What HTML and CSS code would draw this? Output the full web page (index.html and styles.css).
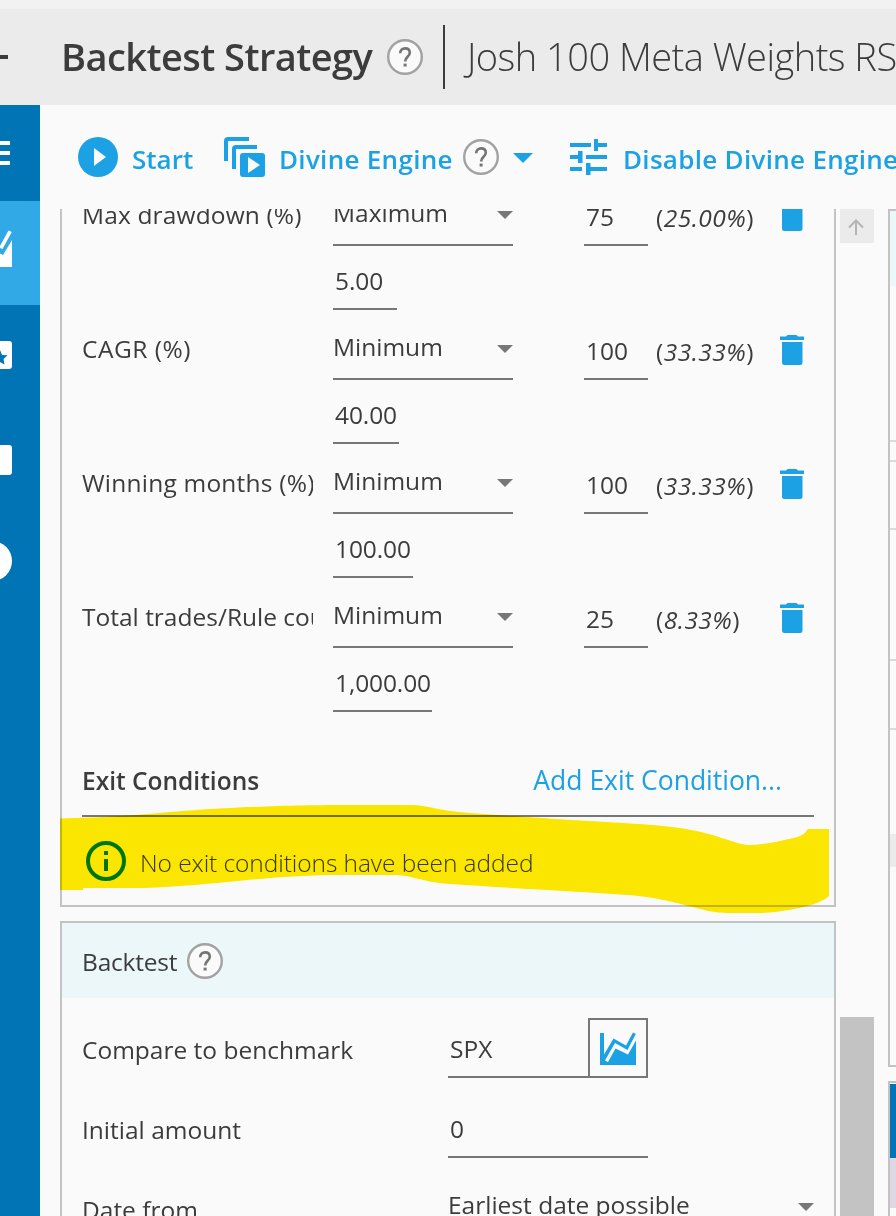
FILE: index.html
```html
<!DOCTYPE html>
<html lang="en">
<head>
<meta charset="utf-8">
<title>Backtest Strategy</title>
<link rel="stylesheet" href="styles.css">
</head>
<body>
<svg width="0" height="0" class="defs" aria-hidden="true">
  <symbol id="help" viewBox="0 0 36 36">
    <circle cx="18" cy="18" r="16.8" fill="#fafafa" stroke="#a2a2a2" stroke-width="2.4"/>
    <path d="M13.2 14.2c0-3 2-4.8 4.9-4.8s4.7 1.8 4.7 4.3c0 4-4.7 4.2-4.7 8.7" fill="none" stroke="#747474" stroke-width="2.6"/>
    <rect x="16.6" y="24.6" width="3" height="2.9" fill="#747474"/>
  </symbol>
  <symbol id="trash" viewBox="0 0 24 30">
    <path d="M0 1.500h6l1.500-1.500h9l1.500 1.500H24V5H0zM2 7h20.500v20.500a2.500 2.500 0 0 1-2.500 2.500H4.500a2.500 2.500 0 0 1-2.500-2.500z" fill="#1ca2e4"/>
  </symbol>
  <symbol id="chart" viewBox="0 0 36 33">
    <path d="M0 1h4v21.500L13.500 6.500 26 13.500 33 0.500l2.800 1.500L27.500 18 15 11 5 28.500l3 1.500 7.500-13.500L28 22.500l8-14V33H0z" fill="currentColor"/>
  </symbol>
</svg>

<div class="strip"></div>
<header class="header">
  <span class="dash"></span>
  <h1 class="title">Backtest Strategy</h1>
  <svg class="help"><use href="#help"/></svg>
  <span class="divider"></span>
  <span class="name">Josh 100 Meta Weights RSI</span>
</header>

<div class="body">
  <nav class="side">
    <div class="item menu"><svg width="40" height="96" viewBox="0 0 40 96"><path d="M0 36h10v4H0zM0 46h10v4H0zM0 56h10v4H0z" fill="#fff"/></svg></div>
    <div class="item active"><svg width="40" height="104" viewBox="0 0 40 104"><path d="M0 45L8.500 29.500l3.300 1.500L2.500 48 0 47zM0 52.500l3 1.500 9-15V66H0z" fill="#fff"/></svg></div>
    <div class="item"><svg width="40" height="300" viewBox="0 0 40 300"><path d="M0 36h9a3 3 0 0 1 3 3v22a3 3 0 0 1-3 3H0zM0 140h9a3 3 0 0 1 3 3v24a3 3 0 0 1-3 3H0z" fill="#fff"/><path d="M0 45l2 5 5.500.3-4 3.700 1 5.500L0 57z" fill="#0074b4"/><circle cx="-8" cy="256" r="20" fill="#fff"/></svg></div>
  </nav>

  <main class="main">
    <div class="toolbar">
      <svg class="play" viewBox="0 0 40 40"><circle cx="20" cy="20" r="20" fill="#1ca2e4"/><path d="M16 11l12 9-12 9z" fill="#fafafa"/></svg>
      <span class="tool start">Start</span>
      <svg class="stack" viewBox="0 0 41 40"><path d="M2 24V4a2 2 0 0 1 2-2h21M10 32V12a2 2 0 0 1 2-2h21" fill="none" stroke="#1ca2e4" stroke-width="4"/><rect x="16" y="16" width="25" height="24" rx="3" fill="#1ca2e4"/><path d="M24 20l12 8-12 8z" fill="#fafafa"/></svg>
      <span class="tool divine">Divine Engine</span>
      <svg class="help"><use href="#help"/></svg>
      <svg class="caret-blue" viewBox="0 0 20 10"><path d="M0 0h20L10 10z" fill="#1ca2e4"/></svg>
      <svg class="tune" viewBox="0 0 37 36"><path d="M0 4h21v4H0zM24 0h4v4h9v4h-9v4h-4zM0 16h8v-4h4.500v12H8v-4H0zM16 16h21v4H16zM0 28h12v4H0zM16 24h4.500v4H37v4H20.500v4H16z" fill="#1ca2e4"/></svg>
      <span class="tool disable">Disable Divine Engine</span>
    </div>

    <div class="columns">
      <div class="left">
        <section class="panel criteria">
          <div class="row">
            <span class="label l1">Max drawdown (%)</span>
            <div class="field"><div class="select"><span class="s0">Maximum</span><i class="caret"></i></div><div class="value w64">5.00</div></div>
            <div class="weight">75</div><span class="pct">(<em>25.00%</em>)</span><svg class="trash"><use href="#trash"/></svg>
          </div>
          <div class="row">
            <span class="label l2">CAGR (%)</span>
            <div class="field"><div class="select"><span>Minimum</span><i class="caret"></i></div><div class="value w66">40.00</div></div>
            <div class="weight">100</div><span class="pct">(<em>33.33%</em>)</span><svg class="trash"><use href="#trash"/></svg>
          </div>
          <div class="row">
            <span class="label l3">Winning months (%)</span>
            <div class="field"><div class="select"><span>Minimum</span><i class="caret"></i></div><div class="value w80">100.00</div></div>
            <div class="weight">100</div><span class="pct">(<em>33.33%</em>)</span><svg class="trash"><use href="#trash"/></svg>
          </div>
          <div class="row">
            <span class="label l4">Total trades/Rule count</span>
            <div class="field"><div class="select"><span>Minimum</span><i class="caret"></i></div><div class="value w99">1,000.00</div></div>
            <div class="weight">25</div><span class="pct">(<em>8.33%</em>)</span><svg class="trash"><use href="#trash"/></svg>
          </div>
          <div class="exit-head"><h2 class="exit-title">Exit Conditions</h2><a class="add">Add Exit Condition...</a></div>
          <div class="notice">
            <svg class="info" viewBox="0 0 40 40"><circle cx="20" cy="20" r="18" fill="none" stroke="#008000" stroke-width="4"/><path d="M18 10h4v4h-4zM18 18h4v12h-4z" fill="#008000"/></svg>
            <span class="notice-text">No exit conditions have been added</span>
          </div>
          <svg class="marker" viewBox="0 0 780 120"><path d="M0 18.500L30 17.500C80 16 110 11 160 8.500S240 5 300 5h50c18 0 28 6 60 8 40 3 70 5 110 7.500s65 3 100 7.500c40 6 55 17 70 17s45-7 50-9c4-2 5-3 8-7h21v67c-7 7-22 10-30 12-20 4-30 5-40 5h-30c-30 0-45-13-100-18-55-4-140-8-185-11.500-25-3-34-8-47-8.500H270c-80 2-110 10-187 13H23v2H0z" fill="#ffeb00"/></svg>
        </section>

        <section class="panel backtest">
          <div class="panel-head"><h2 class="panel-title">Backtest</h2><svg class="help"><use href="#help"/></svg></div>
          <div class="form">
            <div class="form-row"><span class="label f1">Compare to benchmark</span><div class="input bench"><span class="spx">SPX</span><div class="chart-btn"><svg class="chart"><use href="#chart"/></svg></div></div></div>
            <div class="form-row"><span class="label f2">Initial amount</span><div class="input">0</div></div>
            <div class="form-row date"><span class="label f3">Date from</span><div class="date-select"><span>Earliest date possible</span><i class="caret"></i></div></div>
          </div>
        </section>
      </div>

      <div class="scroll"><div class="up"><svg width="18" height="18" viewBox="0 0 18 18"><path d="M9 17V3M2 9.500l7-7 7 7" fill="none" stroke="#b4b4b4" stroke-width="2"/></svg></div><div class="thumb"></div></div>

      <div class="right">
        <div class="side-panel">
          <div class="sp-head"></div>
          <div class="cell c1"></div><div class="cell c2"></div><div class="cell c3"></div><div class="cell c4"></div><div class="cell c5"></div><div class="cell c6"></div><div class="sp-bar"></div>
        </div>
        <div class="side-panel second"><div class="sp-blue"></div><div class="sp-lilac"></div></div>
      </div>
    </div>
  </main>
</div>
</body>
</html>
```

FILE: styles.css
```css
* { box-sizing: border-box; }
body { margin: 0; width: 896px; height: 1216px; overflow: hidden; display: flex; flex-direction: column; background: #fafafa; color: #3c3c3c; font: 24.5px/34px "Open Sans", "Noto Sans", sans-serif; }
h1, h2 { margin: 0; font-size: inherit; }
svg { display: block; flex: none; }
span, h1, h2, a { white-space: nowrap; }
.defs { position: absolute; }
.strip { flex: none; height: 9px; background: #f2f2f2; }
.header { flex: none; height: 96px; background: #ebebeb; display: flex; align-items: center; overflow: hidden; }
.dash { width: 8px; height: 4px; background: #3c3c3c; flex: none; }
.title { width: 313px; margin-left: 53px; margin-right: 13px; font-size: 38px; line-height: 50px; font-weight: 600; letter-spacing: -0.55px; flex: none; margin-top: -2px; }
.help { width: 36px; height: 36px; }
.divider { flex: none; width: 2px; height: 64px; background: #3c3c3c; margin-left: 20px; margin-right: 22px; }
.name { font-size: 38px; line-height: 50px; font-weight: 300; letter-spacing: -0.52px; margin-top: -2px; }

.body { flex: 1; display: flex; min-height: 0; }
.side { width: 40px; flex: none; background: #0074b4; overflow: hidden; }
.item.active { background: #31a9e6; }
.main { flex: 1; min-width: 0; display: flex; flex-direction: column; }
.toolbar { height: 104px; flex: none; display: flex; align-items: center; padding-left: 38px; overflow: hidden; color: #1ca2e4; font-size: 26px; font-weight: 600; }
.play { width: 40px; height: 40px; margin-right: 14px; }
.tool { flex: none; padding-top: 4px; }
.start { width: 61px; margin-right: 31px; }
.stack { width: 41px; height: 40px; margin-right: 14px; }
.divine { width: 173px; margin-right: 11px; letter-spacing: 0.3px; }
.disable { letter-spacing: 0.3px; }
.caret-blue { width: 20px; height: 10px; margin: 2px 37px 0 14px; }
.tune { width: 37px; height: 36px; margin-right: 16px; }

.columns { flex: 1; min-height: 0; display: flex; overflow: hidden; padding-left: 20px; }
.left { width: 776px; flex: none; display: flex; flex-direction: column; gap: 14px; }
.panel { border: 2px solid #c3c3c3; flex: none; }
.criteria { position: relative; height: 709px; margin-top: -11px; border-top: 0; padding-left: 20px; padding-right: 20px; padding-top: 2px; }
.row { display: flex; height: 134px; }
.label { width: 231px; flex: none; overflow: hidden; height: 34px; margin-top: -2px; }
.row .label { margin-right: 20px; }
.l1 { letter-spacing: 0.15px; }
.l2 { letter-spacing: 0.5px; }
.l3 { letter-spacing: 0.22px; }
.field { width: 180px; flex: none; margin-right: 71px; }
.select { height: 46px; border-bottom: 2px solid #777; display: flex; justify-content: space-between; line-height: 34px; }
.select span { margin-top: -4px; }
.caret { width: 16px; height: 8px; background: #777; clip-path: polygon(0 0, 100% 0, 50% 100%); margin-top: 11px; flex: none; }
.value { height: 64px; border-bottom: 2px solid #777; padding: 18px 0 0 2px; letter-spacing: -0.1px; }
.w64 { width: 64px; } .w66 { width: 66px; } .w80 { width: 80px; } .w99 { width: 99px; }
.weight { width: 64px; height: 46px; border-bottom: 2px solid #777; padding-left: 2px; line-height: 34px; flex: none; margin-right: 8px; }
.pct { width: 124px; flex: none; line-height: 36px; letter-spacing: 0.5px; }
.trash { width: 24px; height: 30px; margin-top: 1px; }
.exit-head { margin-top: 16px; height: 65px; border-bottom: 2px solid #777; display: flex; justify-content: space-between; padding: 12px 32px 0 0; }
.exit-title { font-weight: 600; }
.add { font-size: 26.500px; margin-top: -1px; color: #1ca2e4; }
.notice { display: flex; align-items: center; padding: 24px 0 0 4px; }
.info { width: 40px; height: 40px; margin-right: 14px; }
.notice-text { font-weight: 300; padding-top: 4px; letter-spacing: -0.08px; }
.marker { position: absolute; left: -2px; top: 602px; width: 780px; height: 120px; mix-blend-mode: multiply; }

.backtest { height: 500px; }
.panel-head { height: 75px; background: #ebf7f9; display: flex; align-items: center; padding-left: 20px; }
.panel-title { font-weight: 400; width: 96px; margin-right: 9px; padding-top: 2px; letter-spacing: -0.2px; }
.form { padding: 20px 20px 0; }
.form-row { height: 80px; display: flex; }
.form-row .label { width: 346px; margin: 15px 20px 0 0; }
.input { width: 200px; height: 60px; border-bottom: 2px solid #777; padding: 14px 0 0 2px; }
.bench { display: flex; justify-content: space-between; }
.chart-btn { width: 60px; height: 60px; margin-top: -14px; border: 2px solid #777; display: flex; align-items: center; justify-content: center; color: #1ca2e4; }
.chart { width: 36px; height: 33px; }
.date-select { width: 366px; display: flex; justify-content: space-between; padding-top: 10px; }
.date-select .caret { margin-top: 15px; }

.scroll { width: 34px; flex: none; margin-left: 4px; margin-right: 14px; display: flex; flex-direction: column; justify-content: space-between; }
.up { height: 34px; background: #ebebeb; display: flex; align-items: center; justify-content: center; padding: 2px 2px 0 0; }
.thumb { height: 199px; background: #c3c3c3; }
.right { width: 8px; flex: none; display: flex; flex-direction: column; gap: 14px; }
.side-panel { height: 858px; flex: none; border: solid #c3c3c3; border-width: 2px 0 2px 2px; }
.sp-head { height: 75px; background: #ebf7f9; }
.cell { border-bottom: 2px solid #ddd8e0; }
.c1 { height: 156px; } .c2 { height: 20px; } .c3 { height: 68px; } .c4 { height: 131px; } .c5 { height: 69px; }
.c6 { height: 104px; border: 0; }
.sp-bar { height: 33px; background: #ebebeb; }
.second { height: 200px; padding-top: 1px; }
.sp-blue { height: 74px; background: #0074b4; }
.sp-lilac { height: 50px; background: #dcd7e2; }
```
